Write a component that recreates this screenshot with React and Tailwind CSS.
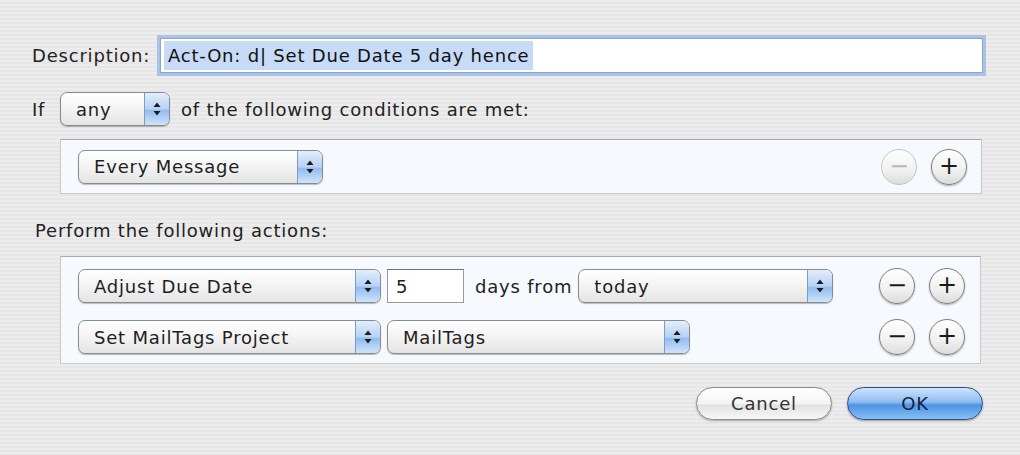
import React from 'react';

const font = { fontFamily: '"DejaVu Sans", "Liberation Sans", sans-serif' };

// little up/down arrows in the blue end of a popup
const Arrows = () => (
  <svg width="10" height="16" viewBox="0 0 10 16">
    <path d="M5 1.5 L8.5 6 L1.5 6 Z" fill="#1c1c1c" />
    <path d="M5 14.5 L8.5 10 L1.5 10 Z" fill="#1c1c1c" />
  </svg>
);

const Popup = ({ label, width }) => (
  <div
    className="flex h-[34px] shrink-0 overflow-hidden rounded-[7px] border border-[#8a8a8a] bg-[linear-gradient(#ffffff,#f3f3f3_50%,#e4e4e4)] shadow-[0_1px_1px_rgba(0,0,0,0.25)]"
    style={{ width }}
  >
    <div className="flex flex-1 items-center pl-[15px] text-[#1e1e1e]">{label}</div>
    <div className="flex w-[25px] items-center justify-center border-l border-[#7b9cc9] bg-[linear-gradient(#e2eefc,#b6d2f4_50%,#93bcef_55%,#cfe4fa)]">
      <Arrows />
    </div>
  </div>
);

const RoundButton = ({ sign, disabled }) => (
  <div
    className={`flex h-[36px] w-[36px] items-center justify-center rounded-full border bg-[linear-gradient(#ffffff,#f0f0f0_60%,#dcdcdc)] text-[24px] leading-none tracking-normal ${
      disabled
        ? 'border-[#c4c4c4] text-[#b8b8b8]'
        : 'border-[#7d7d7d] text-[#1a1a1a] shadow-[0_1px_2px_rgba(0,0,0,0.3)]'
    }`}
  >
    <span className="-mt-[2px]">{sign === '+' ? '+' : '−'}</span>
  </div>
);

const Pair = ({ minusDisabled }) => (
  <div className="ml-auto flex items-center gap-[14px]">
    <RoundButton sign="-" disabled={minusDisabled} />
    <RoundButton sign="+" />
  </div>
);

export default function App() {
  return (
    <div
      className="relative h-[455px] w-[1020px] overflow-hidden bg-[#ebebeb] bg-[repeating-linear-gradient(#ececec_0px,#ececec_2px,#e6e6e6_2px,#e6e6e6_4px)] text-[18px] leading-[25px] tracking-[0.8px] text-[#222]"
      style={font}
    >
      {/* Description */}
      <div className="flex items-center pt-[38px]">
        <span className="ml-[32px] w-[128px]">Description:</span>
        <div className="flex h-[35px] w-[823px] items-center border border-[#8aa6cf] bg-white pl-[3px] shadow-[0_0_0_3px_#a9c3e6]">
          <span className="bg-[#c7dbf7] px-[4px] py-[2px] text-[#111]">Act-On: d| Set Due Date 5 day hence</span>
        </div>
      </div>

      {/* If any */}
      <div className="mt-[19px] flex items-center">
        <span className="ml-[32px] w-[28px]">If</span>
        <Popup label="any" width={110} />
        <span className="ml-[11px]">of the following conditions are met:</span>
      </div>

      {/* Conditions box */}
      <div className="ml-[60px] mt-[13px] flex h-[55px] w-[922px] items-center border border-[#c9c9c9] border-t-[#a9a9a9] bg-[#f6f9fd] pl-[17px] pr-[14px]">
        <Popup label="Every Message" width={245} />
        <Pair minusDisabled />
      </div>

      {/* Actions */}
      <div className="ml-[35px] mt-[24px]">Perform the following actions:</div>

      <div className="ml-[60px] mt-[13px] flex h-[108px] w-[921px] flex-col gap-[15px] border border-[#c9c9c9] border-t-[#a9a9a9] bg-[#f6f9fd] pl-[17px] pr-[15px] pt-[11px]">
        <div className="flex items-center">
          <Popup label="Adjust Due Date" width={303} />
          <div className="ml-[6px] flex h-[34px] w-[77px] items-center border border-[#9a9a9a] border-t-[#6f6f6f] bg-white pl-[8px]">5</div>
          <span className="ml-[11px]">days from</span>
          <div className="ml-[6px]">
            <Popup label="today" width={255} />
          </div>
          <Pair />
        </div>
        <div className="flex items-center">
          <Popup label="Set MailTags Project" width={303} />
          <div className="ml-[6px]">
            <Popup label="MailTags" width={303} />
          </div>
          <Pair />
        </div>
      </div>

      {/* Buttons */}
      <div className="mt-[23px] flex justify-end gap-[15px] pr-[37px]">
        <div className="flex h-[33px] w-[136px] items-center justify-center rounded-full border border-[#8c8c8c] bg-[linear-gradient(#ffffff,#f4f4f4_50%,#e2e2e2_55%,#f7f7f7)] text-[#333] shadow-[0_1px_2px_rgba(0,0,0,0.3)]">
          Cancel
        </div>
        <div className="flex h-[33px] w-[136px] items-center justify-center rounded-full border border-[#2a4f8f] bg-[linear-gradient(#cfe3fb,#8ebdf2_45%,#4f93e4_55%,#86c0f6)] text-[#10233f] shadow-[0_1px_2px_rgba(0,0,0,0.35)]">
          OK
        </div>
      </div>
    </div>
  );
}
